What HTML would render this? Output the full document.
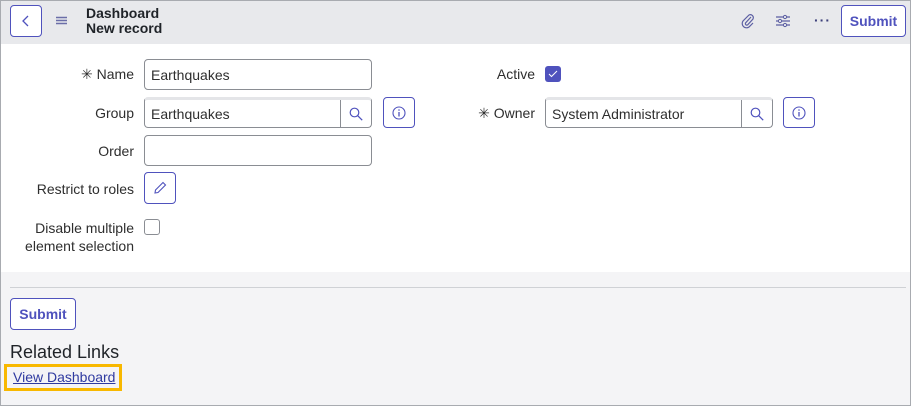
<!DOCTYPE html>
<html><head><style>
*{box-sizing:border-box;margin:0;padding:0}
body{width:911px;height:406px;font-family:"Liberation Sans",sans-serif;background:#f4f4f6;position:relative;overflow:hidden;color:#2e2e2e}
.frame{position:absolute;left:0;top:0;width:911px;height:406px;border:1px solid #a8abb0;pointer-events:none}
.hdr{position:absolute;left:0;top:0;width:911px;height:44px;background:#e8e9ec}
.white{position:absolute;left:0;top:44px;width:911px;height:228px;background:#fff}
.btn{position:absolute;border:1px solid #4f52bd;border-radius:4px;background:#fff;color:#4f52bd;display:flex;align-items:center;justify-content:center}
.lbl{position:absolute;font-size:14px;color:#2e2e2e;text-align:right}
.inp{position:absolute;border:1px solid #8a8d93;border-radius:4px;background:#fff;font-size:14px;padding-left:6px;display:flex;align-items:center;color:#2e2e2e}
.srch{position:absolute;right:0;top:0;width:31px;height:100%;border-left:1px solid #8a8d93;display:flex;align-items:center;justify-content:center}
.sub{font-weight:bold;font-size:14px}
</style></head><body>
<div class="hdr"></div>
<div class="white"></div>
<div class="btn" style="left:10px;top:5px;width:32px;height:32px"><svg width="12" height="14"><path d="M8 2L3 7l5 5" stroke="#4f52bd" stroke-width="1.3" fill="none"/></svg></div>
<svg style="position:absolute;left:56px;top:16px" width="12" height="10"><path d="M0 1.5h11M0 4.5h11M0 7.5h11" stroke="#6b6ea8" stroke-width="1.4"/></svg>
<div style="position:absolute;left:86px;top:6px;font-weight:bold;font-size:14px;line-height:15px;color:#1f2328">Dashboard<br>New record</div>
<svg style="position:absolute;left:740px;top:13px" width="16" height="16" viewBox="0 0 16 16"><path d="M11 4L5.5 10a1.5 1.5 0 0 0 2 2L13 6a3 3 0 0 0-4-4L3 8a4.3 4.3 0 0 0 6 6l4-4" stroke="#5c5fa3" stroke-width="1.2" fill="none"/></svg>
<svg style="position:absolute;left:776px;top:14px" width="14" height="14"><path d="M0 3h14M0 7h14M0 11h14" stroke="#5c5fa3" stroke-width="1.2"/><circle cx="9" cy="3" r="1.6" fill="#e8e9ec" stroke="#5c5fa3"/><circle cx="4" cy="7" r="1.6" fill="#e8e9ec" stroke="#5c5fa3"/><circle cx="9" cy="11" r="1.6" fill="#e8e9ec" stroke="#5c5fa3"/></svg>
<div style="position:absolute;left:814px;top:12px;font-size:14px;font-weight:bold;color:#3c3f7a;letter-spacing:1px">···</div>
<div class="btn sub" style="left:841px;top:5px;width:65px;height:32px">Submit</div>

<div class="lbl" style="left:40px;top:66px;width:94px">✳ Name</div>
<div class="inp" style="left:144px;top:59px;width:228px;height:31px">Earthquakes</div>
<div class="lbl" style="left:40px;top:105px;width:94px">Group</div>
<div class="inp" style="left:144px;top:97px;width:228px;height:31px;border-top:3px solid #e4e5e8">Earthquakes<div class="srch"><svg width="14" height="14"><circle cx="5.5" cy="5.5" r="4.3" stroke="#4f52bd" fill="none" stroke-width="1.2"/><path d="M8.7 8.7l4.5 4.5" stroke="#4f52bd" stroke-width="1.3"/></svg></div></div>
<div class="btn" style="left:383px;top:97px;width:32px;height:31px"><svg width="14" height="14"><circle cx="7" cy="7" r="6" stroke="#4f52bd" fill="none" stroke-width="1.1"/><path d="M7 6v4.5" stroke="#4f52bd" stroke-width="1.3"/><circle cx="7" cy="4" r=".8" fill="#4f52bd"/></svg></div>
<div class="lbl" style="left:40px;top:143px;width:94px">Order</div>
<div class="inp" style="left:144px;top:135px;width:228px;height:31px"></div>
<div class="lbl" style="left:0;top:181px;width:134px">Restrict to roles</div>
<div class="btn" style="left:144px;top:172px;width:32px;height:32px"><svg width="14" height="14"><path d="M2 12l.5-3L10 1.5l2.5 2.5L5 11.5z" stroke="#4f52bd" fill="none" stroke-width="1.1"/></svg></div>
<div class="lbl" style="left:0;top:219px;width:134px;line-height:18px">Disable multiple<br>element selection</div>
<div style="position:absolute;left:144px;top:219px;width:16px;height:16px;border:1px solid #8a8d93;border-radius:3px;background:#fff"></div>

<div class="lbl" style="left:440px;top:66px;width:95px">Active</div>
<div style="position:absolute;left:545px;top:66px;width:16px;height:16px;border-radius:3px;background:#4f52bd"><svg width="16" height="16"><path d="M4 8l2.5 2.5L12 5" stroke="#fff" stroke-width="1" fill="none"/></svg></div>
<div class="lbl" style="left:440px;top:105px;width:95px">✳ Owner</div>
<div class="inp" style="left:545px;top:97px;width:228px;height:31px;border-top:3px solid #e4e5e8">System Administrator<div class="srch"><svg width="14" height="14"><circle cx="5.5" cy="5.5" r="4.3" stroke="#4f52bd" fill="none" stroke-width="1.2"/><path d="M8.7 8.7l4.5 4.5" stroke="#4f52bd" stroke-width="1.3"/></svg></div></div>
<div class="btn" style="left:783px;top:97px;width:32px;height:31px"><svg width="14" height="14"><circle cx="7" cy="7" r="6" stroke="#4f52bd" fill="none" stroke-width="1.1"/><path d="M7 6v4.5" stroke="#4f52bd" stroke-width="1.3"/><circle cx="7" cy="4" r=".8" fill="#4f52bd"/></svg></div>

<div style="position:absolute;left:10px;top:287px;width:896px;height:1px;background:#cfd1d5"></div>
<div class="btn sub" style="left:10px;top:298px;width:66px;height:32px">Submit</div>
<div style="position:absolute;left:10px;top:342px;font-size:18px;color:#1f2328">Related Links</div>
<div style="position:absolute;left:4px;top:364px;width:118px;height:27px;border:3px solid #f8b800;padding-left:6px;font-size:14px;color:#2f3aa0;text-decoration:underline;line-height:21px">View Dashboard</div>
<div class="frame"></div>
</body></html>
